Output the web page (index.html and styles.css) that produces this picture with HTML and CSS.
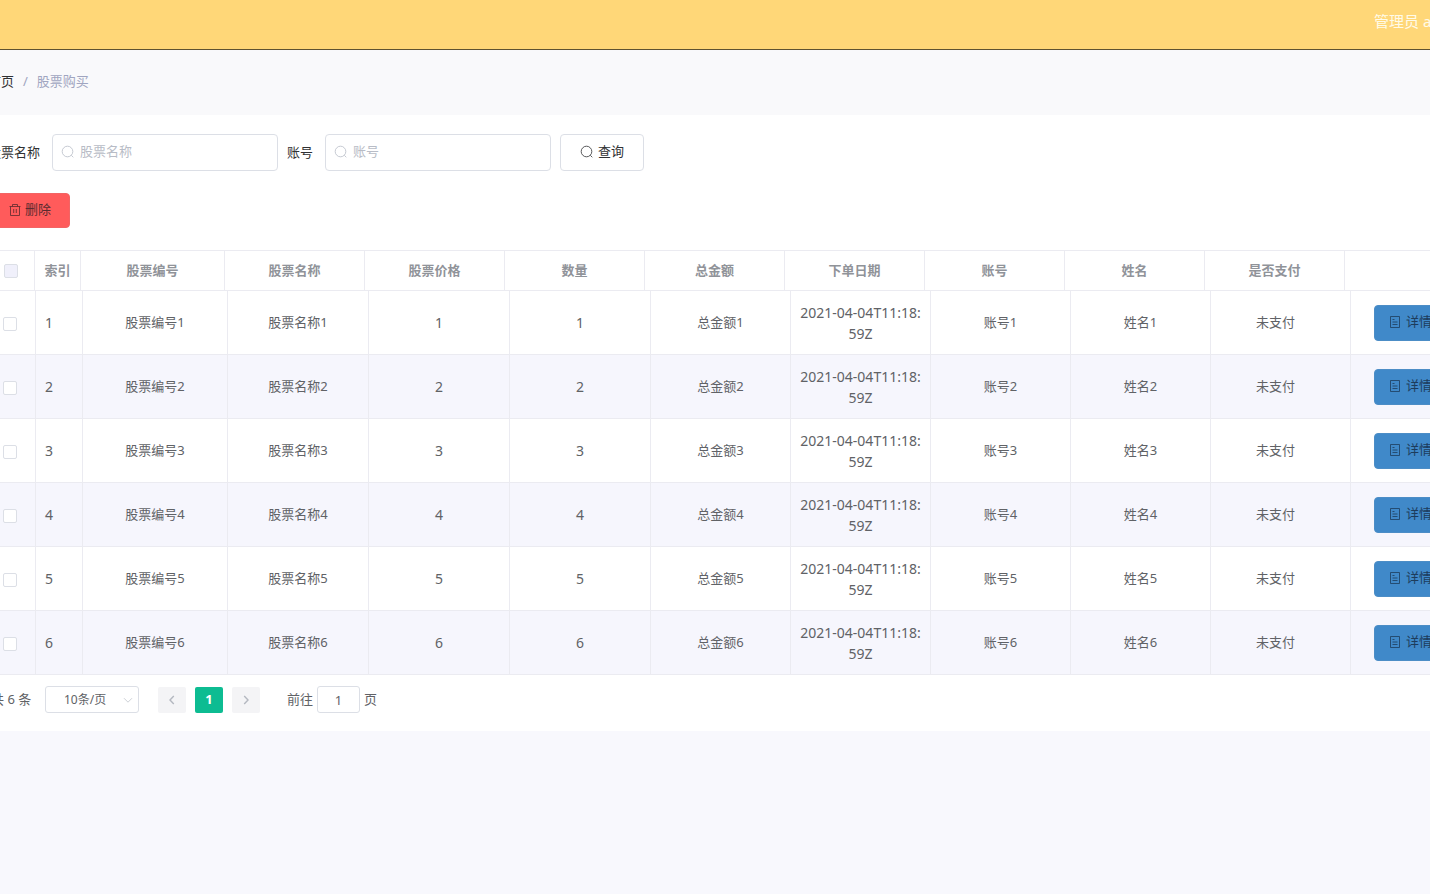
FILE: index.html
```html
<!DOCTYPE html>
<html lang="zh-CN">
<head>
<meta charset="utf-8">
<title>股票购买</title>
<link rel="stylesheet" href="styles.css">
</head>
<body>
<svg class="sprite" aria-hidden="true">
  <symbol id="search" viewBox="0 0 14 14"><circle cx="6.5" cy="6.5" r="5.3"/><path d="M10.3 10.3 12.3 12.3"/></symbol>
  <symbol id="trash" viewBox="0 0 14 14"><path d="M1.5 3.5h11M4.5 3.5v-2h5v2M2.5 3.5v9h9v-9M5.7 6v4M8.3 6v4"/></symbol>
  <symbol id="doc" viewBox="0 0 14 14"><path d="M2.5 1.5h9v11h-9zM4.5 4.5h2M4.5 7h5M4.5 9.5h5"/></symbol>
  <symbol id="left" viewBox="0 0 14 14"><path d="M8.8 3 5 7l3.8 4"/></symbol>
  <symbol id="right" viewBox="0 0 14 14"><path d="M5.2 3 9 7l-3.8 4"/></symbol>
  <symbol id="down" viewBox="0 0 14 14"><path d="M3 5.2 7 9.2l4-4"/></symbol>
</svg>
<div class="page">
  <header class="topbar"><span class="user">管理员 admin</span></header>
  <nav class="breadcrumb" aria-label="导航"><a href="#">首页</a><span class="slash">/</span><span>股票购买</span></nav>
  <main class="card">
    <form class="filters">
      <div class="field"><label for="stock">股票名称</label><span class="input-wrap"><svg class="icon"><use href="#search"/></svg><input id="stock" type="text" placeholder="股票名称"></span></div>
      <div class="field"><label for="account">账号</label><span class="input-wrap"><svg class="icon"><use href="#search"/></svg><input id="account" type="text" placeholder="账号"></span></div>
      <button class="btn" type="button"><svg class="icon"><use href="#search"/></svg>查询</button>
    </form>
    <div class="toolbar"><button class="btn danger" type="button"><svg class="icon"><use href="#trash"/></svg>删除</button></div>
    <table class="grid head">
      <colgroup><col class="h-check"><col class="h-index"><col class="h-code"><col class="c140"><col class="c140"><col class="c140"><col class="c140"><col class="c140"><col class="c140"><col class="c140"><col class="c140"><col></colgroup>
      <thead><tr><th><input type="checkbox" aria-label="全选"></th><th>索引</th><th>股票编号</th><th>股票名称</th><th>股票价格</th><th>数量</th><th>总金额</th><th>下单日期</th><th>账号</th><th>姓名</th><th>是否支付</th><td></td></tr></thead>
    </table>
    <table class="grid body">
      <colgroup><col class="b-check"><col class="b-index"><col class="b-code"><col class="c141"><col class="c141"><col class="c141"><col class="c140"><col class="c140"><col class="c140"><col class="c140"><col class="c140"><col></colgroup>
      <tbody id="rows"></tbody>
    </table>
    <div class="pager">
      <span class="total">共 6 条</span>
      <span class="select-wrap"><select aria-label="每页条数"><option>10条/页</option></select><svg class="icon"><use href="#down"/></svg></span>
      <div class="pages">
        <button type="button" aria-label="上一页"><svg class="icon"><use href="#left"/></svg></button>
        <button type="button" class="current">1</button>
        <button type="button" aria-label="下一页"><svg class="icon"><use href="#right"/></svg></button>
      </div>
      <div class="jump"><label for="goto">前往</label><input id="goto" type="text" value="1"><span>页</span></div>
    </div>
  </main>
</div>
<script src="app.js"></script>
</body>
</html>
```
FILE: styles.css
```css
* { box-sizing: border-box; }
body {
  margin: 0;
  min-height: 100vh;
  overflow-x: hidden;
  background: #f8f8fd;
  color: #606266;
  font: 13px/21px "Noto Sans", "Noto Sans CJK SC", sans-serif;
}
button, input, select { font: inherit; color: inherit; margin: 0; }
.sprite { display: none; }
.icon { width: 14px; height: 14px; flex: none; fill: none; stroke: currentColor; stroke-width: 0.8; }

/* The page is wider than the window on both sides */
.page { margin: 0 -132px 0 -12px; overflow: hidden; }
.topbar {
  display: flex;
  justify-content: flex-end;
  align-items: center;
  height: 50px;
  padding: 0 96px 6px 0;
  background: #ffd778;
  border-bottom: 1px solid #5e5230;
  color: #fffbe8;
  font-size: 15px;
}
.user { width: 92px; white-space: nowrap; }
.breadcrumb {
  display: flex;
  align-items: center;
  height: 65px;
  padding-bottom: 2px;
  background: #f9f9fb;
  color: #a0a5c0;
}
.breadcrumb a { color: #303133; text-decoration: none; }
.slash { margin: 0 9px; }

.card { background: #fff; padding: 19px 0 18px; }
.filters { display: flex; align-items: center; gap: 9px; color: #303133; }
.field { display: flex; align-items: center; gap: 12px; }
.input-wrap {
  display: flex;
  align-items: center;
  gap: 5px;
  width: 226px;
  height: 37px;
  padding: 0 8px 2px;
  border: 1px solid #dcdfe6;
  border-radius: 4px;
  color: #b8bcc6;
}
.input-wrap input { flex: 1; min-width: 0; border: 0; padding: 0; background: none; outline: 0; }
.input-wrap input::placeholder { color: #b8bcc6; opacity: 1; }
.btn {
  display: inline-flex;
  align-items: center;
  gap: 4px;
  height: 37px;
  padding: 0 19px 2px;
  border: 1px solid #dcdfe6;
  border-radius: 4px;
  background: #fff;
  color: #303133;
  white-space: nowrap;
}
.toolbar { display: flex; padding: 22px 0; }
.btn.danger { height: 35px; padding: 0 18px 2px 19px; gap: 3px; background: #ff5b5b; border-color: #f26464; color: #5a2b2f; }
.btn.detail { height: 36px; padding: 0 13px 2px; background: #4089c9; border-color: #4c8dc6; color: #1d3c5c; }

.grid { width: 100%; table-layout: fixed; border-collapse: separate; border-spacing: 0; }
.grid th, .grid td {
  padding: 0 10px;
  border-right: 1px solid #ebebf1;
  border-bottom: 1px solid #ebebf1;
  text-align: center;
}
.head th, .head td { height: 41px; border-top: 1px solid #ebebf1; color: #909399; font-weight: 600; }
.head th { padding: 0; }
.body td { height: 64px; }
.body tr:nth-child(even) { background: #f6f6fd; }
.body .check { text-align: left; padding: 0 0 0 15px; }
.body .index { text-align: left; padding-left: 9px; font-size: 14px; }
.body .number, .body .date { font-size: 14px; }
.body .date { padding: 0 9px; word-break: break-all; }
.body .paid { padding-right: 20px; }
.body .action { text-align: left; padding-left: 23px; }
.h-check { width: 47px; }
.h-index { width: 46px; }
.h-code { width: 144px; }
.b-check { width: 48px; }
.b-index { width: 47px; }
.b-code { width: 145px; }
.c140 { width: 140px; }
.c141 { width: 141px; }
input[type="checkbox"] {
  appearance: none;
  display: inline-block;
  width: 14px;
  height: 14px;
  border: 1px solid #dcdfe6;
  border-radius: 2px;
  background: #fff;
  vertical-align: middle;
}
.head input[type="checkbox"] { background: #f0f0fb; }

.pager { display: flex; align-items: center; padding-top: 11px; }
.total { width: 57px; padding-left: 3px; white-space: nowrap; }
.select-wrap { position: relative; }
.select-wrap select {
  appearance: none;
  display: block;
  width: 94px;
  height: 27px;
  padding: 0 18px;
  border: 1px solid #dcdfe6;
  border-radius: 3px;
  background: #fff;
  font-size: 12px;
}
.select-wrap .icon { position: absolute; right: 4px; top: 7px; color: #c0c4cc; pointer-events: none; }
.pages { display: flex; gap: 9px; margin: 0 27px 0 19px; }
.pages button {
  display: flex;
  align-items: center;
  justify-content: center;
  width: 28px;
  height: 26px;
  padding: 0;
  border: 0;
  border-radius: 2px;
  background: #f4f4f6;
  color: #b4b8c0;
}
.pages .icon { stroke-width: 1.4; }
.pages .current { background: #0dbc92; color: #fff; font-weight: 700; }
.jump { display: flex; align-items: center; gap: 4px; }
.jump input { width: 43px; height: 27px; padding: 0; border: 1px solid #dcdfe6; border-radius: 3px; text-align: center; }
```
FILE: app.js
```js
const rows = document.getElementById('rows');
for (let i = 1; i <= 6; i++) {
  rows.insertAdjacentHTML('beforeend', `<tr>
    <td class="check"><input type="checkbox" aria-label="选择 ${i}"></td>
    <td class="index">${i}</td>
    <td>股票编号${i}</td>
    <td>股票名称${i}</td>
    <td class="number">${i}</td>
    <td class="number">${i}</td>
    <td>总金额${i}</td>
    <td class="date">2021-04-04T11:18:59Z</td>
    <td>账号${i}</td>
    <td>姓名${i}</td>
    <td class="paid">未支付</td>
    <td class="action"><button class="btn detail" type="button"><svg class="icon"><use href="#doc"/></svg>详情</button></td>
  </tr>`);
}
```
